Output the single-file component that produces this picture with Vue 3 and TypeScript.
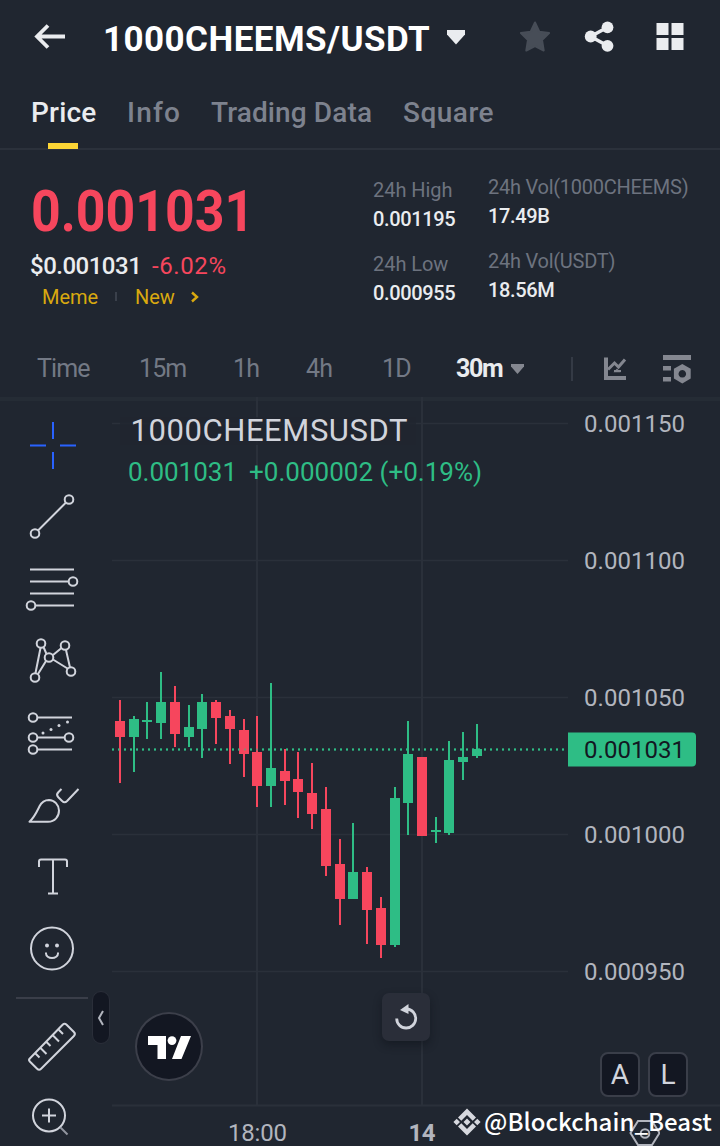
<script setup lang="ts">
interface Candle {
  x: number
  up: boolean
  top: number
  bottom: number
  high: number
  low: number
}

const raw: [number, number, number, number, number, number][] = [
  [120, 0, 721, 737, 700, 783],
  [134, 1, 719, 737, 716, 772],
  [147, 1, 720, 722, 702, 739],
  [161, 1, 702, 723, 672, 739],
  [175, 0, 702, 734, 686, 747],
  [189, 1, 727, 737, 705, 747],
  [202, 1, 702, 729, 694, 758],
  [216, 0, 702, 718, 700, 744],
  [230, 0, 716, 729, 710, 764],
  [244, 0, 730, 754, 719, 777],
  [257, 0, 752, 786, 716, 807],
  [271, 1, 768, 786, 683, 807],
  [285, 0, 771, 781, 749, 805],
  [298, 0, 779, 792, 752, 818],
  [312, 0, 793, 814, 763, 829],
  [326, 0, 809, 866, 787, 876],
  [340, 0, 864, 899, 839, 925],
  [353, 1, 872, 899, 823, 899],
  [367, 0, 872, 910, 867, 944],
  [381, 0, 908, 945, 897, 958],
  [395, 1, 798, 945, 787, 947],
  [408, 1, 754, 803, 721, 835],
  [422, 0, 757, 836, 757, 836],
  [436, 1, 830, 832, 817, 843],
  [449, 1, 760, 833, 741, 835],
  [463, 1, 757, 762, 732, 780],
  [477, 1, 749, 756, 724, 758],
]
const candles: Candle[] = raw.map(([x, up, top, bottom, high, low]) => ({ x, up: up === 1, top, bottom, high, low }))

const levels = [
  { y: 424, label: '0.001150' },
  { y: 561, label: '0.001100' },
  { y: 698, label: '0.001050' },
  { y: 835, label: '0.001000' },
  { y: 972, label: '0.000950' },
]
const tabs = ['Price', 'Info', 'Trading Data', 'Square']
const intervals = ['Time', '15m', '1h', '4h', '1D']
</script>

<template>
  <main class="page">
    <header class="bar">
      <svg class="back" width="32" height="28" viewBox="34 23 32 28"><path d="M65 36.500H38M48 25.500L37 36.500L48 47.500" fill="none" stroke="#eaecef" stroke-width="3.800" /></svg>
      <h1>1000CHEEMS/USDT</h1>
      <svg class="caret" width="18" height="15" viewBox="447 29 18 15"><path d="M447 29h18v4.500l-9 10-9-10z" fill="#eaecef" /></svg>
      <svg class="star" width="30" height="32" viewBox="520 21 30 32"><path d="M535 22.500l4.300 9.200 9.800 1.300-7.100 7 1.700 10.500-8.700-4.500-8.700 4.500 1.700-10.500-7.100-7 9.800-1.300z" fill="#474d57" stroke="#474d57" stroke-width="2" stroke-linejoin="round" /></svg>
      <svg class="share" width="30" height="32" viewBox="584 21 30 32"><g fill="#eaecef"><circle cx="607.500" cy="27.300" r="5.900" /><circle cx="590.700" cy="36.500" r="5.900" /><circle cx="607.500" cy="45.800" r="5.900" /></g><path d="M607.500 27.300L590.700 36.500L607.500 45.800" fill="none" stroke="#eaecef" stroke-width="3.500" /></svg>
      <svg class="grid" width="28" height="28" viewBox="656 23 28 28"><path d="M656.500 23h12v12h-12zM671.500 23h12v12h-12zM656.500 38h12v12h-12zM671.500 38h12v12h-12z" fill="#eaecef" /></svg>
    </header>

    <nav class="tabs">
      <a v-for="(t, i) in tabs" :key="t" :class="['tab', 't' + i, { active: i === 0 }]"><span>{{ t }}</span></a>
    </nav>

    <section class="stats">
      <div class="quote">
        <div class="last"><span>0.001031</span></div>
        <div class="fiat"><b>$0.001031</b><span>-6.02%</span></div>
        <div class="tags">
          <span class="meme">Meme</span><i></i><span class="new">New</span>
          <svg width="10" height="12" viewBox="0 0 10 12"><path d="M2 1.500L7 6L2 10.500" fill="none" stroke="#d9a90f" stroke-width="2.400" /></svg>
        </div>
      </div>
      <dl class="col c1">
        <dt class="high">24h High</dt><dd>0.001195</dd>
        <dt class="low">24h Low</dt><dd>0.000955</dd>
      </dl>
      <dl class="col c2">
        <dt>24h Vol(1000CHEEMS)</dt><dd>17.49B</dd>
        <dt>24h Vol(USDT)</dt><dd>18.56M</dd>
      </dl>
    </section>

    <nav class="intervals">
      <span v-for="t in intervals" :key="t">{{ t }}</span>
      <b>30m</b>
      <svg width="13" height="10" viewBox="0 0 13 10"><path d="M0 0h13v2.500l-6.500 7.500L0 2.500z" fill="#848790" /></svg>
      <i></i>
      <svg width="24" height="26" viewBox="603 354 24 26"><path d="M606 355.500V376H626" fill="none" stroke="#848790" stroke-width="4" /><path d="M608 367.500l6.500-6.500 4 4 6.500-7.500" fill="none" stroke="#848790" stroke-width="3" /><path d="M617 366.500l3.500 3.800h-7zM614 368h7v2h-7z" fill="#848790" /></svg>
      <svg width="30" height="30" viewBox="661 352 30 30"><path d="M662 353h28v5h-28zM662 364h8v4.500h-8zM662 375h8v4.500h-8z" fill="#848790" /><path fill-rule="evenodd" d="M681.300 362l8.400 4.800v9.800l-8.400 4.900-8.400-4.900v-9.800zM681.300 368a3.800 3.800 0 1 0 .01 0z" fill="#848790" /></svg>
    </nav>

    <section class="chart">
      <aside class="tools">
        <svg viewBox="0 409 112 72"><path d="M53 422v17M53 452v17M30 445.500h16M60 445.500h16" stroke="#2962ff" stroke-width="2" /></svg>
        <svg viewBox="0 481 112 72"><circle cx="69" cy="499.500" r="4.300" /><circle cx="35" cy="533.500" r="4.300" /><path d="M38 530.500l28-28" /></svg>
        <svg viewBox="0 553 112 72"><path d="M30 569.500h44M30 581.500h38.500M30 593.500h44M35.500 605.500H74" /><circle cx="73" cy="581.500" r="4.300" /><circle cx="31" cy="605.500" r="4.300" /></svg>
        <svg viewBox="0 625 112 72"><circle cx="41" cy="643.500" r="4.300" /><circle cx="65" cy="645.500" r="4.300" /><circle cx="49" cy="657.500" r="4.300" /><circle cx="71" cy="671.500" r="4.300" /><circle cx="35" cy="677.500" r="4.300" /><path d="M40.500 648l-5 25M43.500 647l3 7M46 661l-8 13M53 655l8.500-7M66 650l4 17.500M53 659.500l14.500 9" /></svg>
        <svg viewBox="0 697 112 72"><circle cx="33" cy="717.500" r="4.300" /><circle cx="33" cy="737.500" r="4.300" /><circle cx="69" cy="737.500" r="4.300" /><circle cx="33" cy="749.500" r="4.300" /><path d="M37.500 717.500H72M37.500 737.500h27M37.500 749.500H72" /><g fill="#d1d4dc" stroke="none"><circle cx="43" cy="733" r="1.500" /><circle cx="51" cy="729.500" r="1.500" /><circle cx="59" cy="725.500" r="1.500" /><circle cx="67.500" cy="722" r="1.500" /></g></svg>
        <svg viewBox="0 769 112 72"><path stroke-linejoin="round" d="M29.500 821.800c5.500-5.300 7.500-10.500 10-15.500 2.500-5 6-6.300 9.500-6.300a10.300 10.800 0 0 1 10 10.500c0 6-4 11.300-11 11.300zM61.500 789l-3.200 3.200q-2.500 2.500 0 5l3.800 3.800q2.500 2.500 5 0L78.500 789" /></svg>
        <svg viewBox="0 841 112 72"><path d="M39 867v-5.500q0-2 2-2h24q2 0 2 2v5.500M53 859.500v34M48 893.500h10" /></svg>
        <svg viewBox="0 913 112 72"><circle cx="52" cy="948.500" r="21" /><path d="M46 952.500v1a6 4.500 0 0 0 12 0v-1" /><g fill="#d1d4dc" stroke="none"><circle cx="47" cy="945.500" r="2" /><circle cx="57" cy="945.500" r="2" /></g></svg>
        <hr />
        <svg viewBox="0 1010 112 72"><path d="M29.800 1058.500l32.800-33.800q2-2 4 0l7.300 7.300q2 2 0 4l-32.800 32.800q-2 2-4 0l-7.300-7.300q-1.500-1.500 0-3zM35.500 1053.500l4 4M40.500 1048l6 6M46.500 1042l4 4M53 1035.500l6 6M59 1030l4 4" /></svg>
        <svg class="zoom" viewBox="0 1082 112 64"><circle cx="49" cy="1115.500" r="16" /><path d="M42 1115.500h14M49 1108.500v14" /><path d="M60.500 1127.500l7 7" stroke="#9296a0" /></svg>
      </aside>

      <svg class="plot" width="608" height="749" viewBox="112 397 608 749">
        <g stroke="#2a303a" stroke-width="2">
          <path v-for="l in levels" :key="l.y" :d="`M112 ${l.y - 0.5}H568`" stroke-width="1.600" />
          <path d="M257 397V1105M422 397V1105M112 1105.500H720" />
        </g>
        <path d="M112 749.500H566" stroke="#2ebd85" stroke-width="2" stroke-dasharray="2 4" />
        <g v-for="c in candles" :key="c.x" :fill="c.up ? '#2ebd85' : '#f6465d'">
          <rect :x="c.x - 1" :y="c.high" width="2" :height="c.low - c.high" />
          <rect :x="c.x - 5" :y="c.top" width="10" :height="c.bottom - c.top" />
        </g>
        <path d="M112 749.500H566" stroke="#2ebd85" stroke-width="2" stroke-dasharray="2 4" opacity="0.500" />

        <rect x="120" y="417" width="296" height="28" fill="#202630" fill-opacity="0.800" />
        <text x="130.500" y="441" font-size="31" fill="#d1d4dc" textLength="277">1000CHEEMSUSDT</text>
        <g font-size="26" fill="#2ebd85">
          <text x="128" y="481" textLength="109">0.001031</text>
          <text x="249" y="481" textLength="233">+0.000002 (+0.19%)</text>
        </g>
        <g font-size="24" fill="#b2b5be">
          <text v-for="l in levels" :key="l.label" x="584" :y="l.y + 8" textLength="101">{{ l.label }}</text>
          <text x="228" y="1141" textLength="59">18:00</text>
          <text x="408.500" y="1141" font-weight="700" textLength="27">14</text>
        </g>
        <path d="M568 732.500h124q4 0 4 4v26q0 4-4 4H568z" fill="#2ebd85" />
        <text x="584" y="758" font-size="24" fill="#131722" textLength="101">0.001031</text>
      </svg>

      <div class="handle"><svg width="8" height="16" viewBox="0 0 8 16"><path d="M6 1L2 8l4 7" fill="none" stroke="#b2b5be" stroke-width="2" /></svg></div>
      <div class="brand">
        <svg width="44" height="24" viewBox="0 0 44 24"><path d="M0 0h18v23H9.500V9H0zM33 0h10L33.500 23H24z" fill="#fff" /><circle cx="24" cy="4.600" r="4.400" fill="#fff" /></svg>
      </div>
      <div class="reset">
        <svg width="24" height="28" viewBox="394 1003 24 28"><path d="M396.700 1018.500a9.500 9.500 0 1 0 10-9.500" fill="none" stroke="#d1d4dc" stroke-width="2.800" /><path d="M400 1010l8.500-6v10z" fill="#d1d4dc" /></svg>
      </div>
      <div class="modes"><span>A</span><span>L</span></div>
      <svg class="gear" width="32" height="30" viewBox="628 1116 32 30"><path d="M638 1121h14l7.500 12-7.500 12h-14l-7.500-12z" fill="none" stroke="#b2b5be" stroke-width="2" /><circle cx="645" cy="1133.500" r="4.300" fill="none" stroke="#b2b5be" stroke-width="2" /></svg>
      <div class="watermark">
        <svg width="28" height="28" viewBox="0 0 28 28"><path d="M14 0.500l9 9-3.300 3.300L14 7.100l-5.700 5.700L5 9.500zM14 27.500l9-9-3.300-3.300L14 20.900l-5.700-5.700L5 18.500zM3.700 10.700L7 14l-3.300 3.300L.4 14zM24.300 10.700l3.300 3.300-3.300 3.300L21 14zM14 10.500l3.500 3.500-3.500 3.500-3.500-3.500z" fill="#d6d8de" /></svg>
        <span>@Blockchain_Beast</span>
      </div>
    </section>
  </main>
</template>

<style>
body {
  background: #202630;
}
</style>

<style scoped>
.page {
  width: 720px;
  height: 1146px;
  overflow: hidden;
  background: #202630;
  color: #eaecef;
  font-family: Roboto, "Liberation Sans", sans-serif;
}
svg {
  display: block;
  flex: none;
}
.bar {
  height: 74px;
  display: flex;
  align-items: center;
  padding-left: 34px;
}
h1 {
  margin: 5px 0 0 37px;
  width: 344px;
  font-size: 35px;
  line-height: 40px;
  font-weight: 700;
  letter-spacing: 0.45px;
  color: #fff;
  white-space: nowrap;
}
.star { margin-left: 55px; }
.share { margin-left: 34px; }
.grid { margin-left: 42px; }
.tabs {
  box-sizing: border-box;
  height: 76px;
  padding-left: 31px;
  display: grid;
  grid-template-columns: 96px 84px 192px auto;
  border-bottom: 2px solid #2b313b;
  font-size: 28px;
  font-weight: 500;
  line-height: 78px;
  color: #848e9c;
  white-space: nowrap;
}
.tab { color: #7d828e; }
.tab.active {
  color: #eaecef;
  position: relative;
  letter-spacing: 0.2px;
}
.tab.active::after {
  content: "";
  position: absolute;
  left: 17px;
  bottom: 3px;
  width: 30px;
  height: 6px;
  background: #fcd535;
}
.t1 { letter-spacing: 1.2px; }
.t2 { letter-spacing: 0.12px; }
.t3 { letter-spacing: 0.5px; }
.stats {
  height: 187px;
  display: grid;
  grid-template-columns: 373px 115px 1fr;
  white-space: nowrap;
}
.last {
  height: 63px;
  padding: 30px 0 0 31px;
  font-size: 57px;
  line-height: 63px;
  font-weight: 700;
  color: #f6465d;
}
.last span {
  display: inline-block;
  transform: scaleX(0.91);
  transform-origin: 0 50%;
}
.fiat {
  display: flex;
  padding-left: 30px;
  margin-top: 9px;
  font-size: 24px;
  line-height: 28px;
}
.fiat b {
  width: 122px;
  font-weight: 500;
  letter-spacing: -0.5px;
}
.fiat span {
  color: #f6465d;
  letter-spacing: 0.6px;
}
.tags {
  display: flex;
  align-items: center;
  height: 33px;
  padding-left: 42px;
  font-size: 20px;
  color: #d9a90f;
}
.meme { width: 73px; }
.tags i {
  width: 2px;
  height: 9px;
  background: #3a404b;
}
.new { margin-left: 18px; width: 55px; }
dl, dd, dt { margin: 0; }
.col {
  font-size: 20px;
  line-height: 29px;
}
.c1 { padding-top: 26px; }
.c2 { padding-top: 23px; }
dt {
  color: #6d737f;
  letter-spacing: -0.25px;
}
.c1 dt { letter-spacing: -0.05px; }
dd {
  margin-bottom: 16px;
  font-weight: 500;
  letter-spacing: -0.35px;
}
.intervals {
  height: 60px;
  padding-left: 37px;
  display: grid;
  grid-template-columns: 102px 94px 73px 76px 74px 55px 60px 32px 59px auto;
  align-items: center;
  font-size: 25px;
  line-height: 64px;
  letter-spacing: -0.9px;
  color: #737985;
}
.intervals b {
  color: #eaecef;
  font-weight: 700;
  letter-spacing: -1.3px;
}
.intervals i {
  width: 2px;
  height: 24px;
  background: #343a45;
}
.chart {
  position: relative;
  display: flex;
  height: 749px;
  box-shadow: inset 0 4px 0 #252c35;
}
.tools {
  width: 112px;
  padding-top: 12px;
}
.tools svg {
  width: 112px;
  height: 72px;
  fill: none;
  stroke: #d1d4dc;
  stroke-width: 2;
}
.tools svg.zoom { height: 64px; }
.tools hr {
  width: 72px;
  height: 2px;
  margin: 12px 0 11px 16px;
  border: 0;
  background: #3a3e49;
}
.handle {
  position: absolute;
  left: 92px;
  top: 594px;
  box-sizing: border-box;
  width: 18px;
  height: 53px;
  border: 1px solid #2a2e39;
  border-radius: 9px;
  background: #131722;
  display: grid;
  place-items: center;
}
.brand {
  position: absolute;
  left: 135px;
  top: 615px;
  box-sizing: border-box;
  width: 68px;
  height: 69px;
  border: 2px solid #3c3f4a;
  border-radius: 50%;
  background: #131722;
  display: grid;
  place-items: center;
  padding: 2px 0 0 2px;
}
.reset {
  position: absolute;
  left: 382px;
  top: 596px;
  width: 48px;
  height: 48px;
  border-radius: 7px;
  background: #2a2e39;
  box-shadow: 0 4px 8px rgba(12, 15, 22, 0.45);
  display: grid;
  place-items: center;
}
.modes {
  position: absolute;
  left: 600px;
  top: 655px;
  display: flex;
  gap: 8px;
}
.modes span {
  box-sizing: border-box;
  width: 40px;
  height: 45px;
  border: 2px solid #3a3e49;
  border-radius: 8px;
  background: #131722;
  color: #d1d4dc;
  font-size: 28px;
  line-height: 42px;
  text-align: center;
}
.gear {
  position: absolute;
  left: 628px;
  top: 719px;
}
.watermark {
  position: absolute;
  left: 453px;
  top: 711px;
  display: flex;
  align-items: center;
  gap: 3px;
  color: #fff;
  font: 500 24px/28px "Noto Sans CJK SC", sans-serif;
}
.watermark span {
  margin-top: -2px;
  letter-spacing: 0.05px;
}
</style>
